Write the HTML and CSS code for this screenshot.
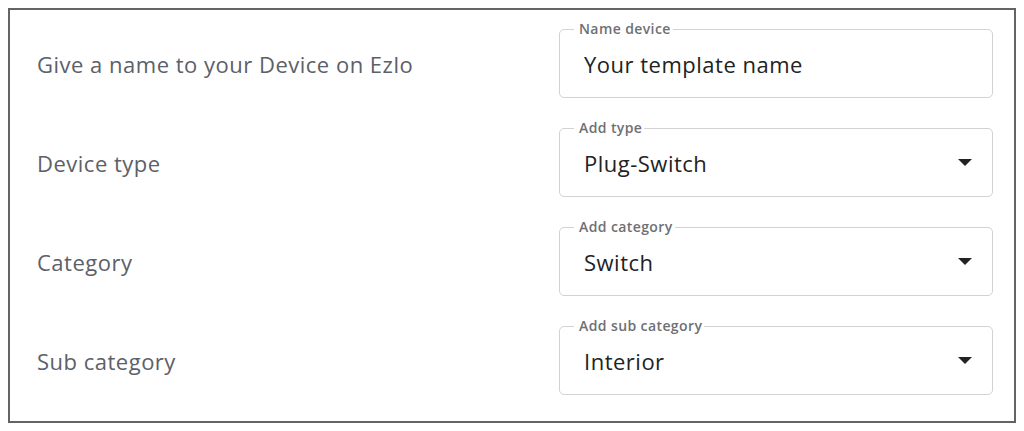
FILE: index.html
```html
<!DOCTYPE html>
<html lang="en">

<head>
    <meta charset="UTF-8">
    <meta name="viewport" content="width=device-width, initial-scale=1.0">
    <title>Device template</title>
    <link rel="stylesheet" href="styles.css">
</head>

<body>
    <form class="device-form">
        <div class="form-row">
            <label class="row-label" for="device-name">Give a name to your Device on Ezlo</label>
            <div class="field">
                <span class="field-legend">Name device</span>
                <input id="device-name" class="field-input" type="text" value="Your template name">
            </div>
        </div>

        <div class="form-row">
            <span class="row-label">Device type</span>
            <div class="field field-select">
                <span class="field-legend">Add type</span>
                <span class="field-value">Plug-Switch</span>
                <svg class="field-arrow" viewBox="0 0 14 7"><path d="M0 0h14L7 7z" /></svg>
            </div>
        </div>

        <div class="form-row">
            <span class="row-label">Category</span>
            <div class="field field-select">
                <span class="field-legend">Add category</span>
                <span class="field-value">Switch</span>
                <svg class="field-arrow" viewBox="0 0 14 7"><path d="M0 0h14L7 7z" /></svg>
            </div>
        </div>

        <div class="form-row">
            <span class="row-label">Sub category</span>
            <div class="field field-select">
                <span class="field-legend">Add sub category</span>
                <span class="field-value">Interior</span>
                <svg class="field-arrow" viewBox="0 0 14 7"><path d="M0 0h14L7 7z" /></svg>
            </div>
        </div>
    </form>
</body>

</html>
```

FILE: styles.css
```css
body {
    margin: 8px;
    background: #fff;
    font-family: "Open Sans", "Liberation Sans", sans-serif;
}

.device-form {
    box-sizing: border-box;
    height: 415px;
    display: flex;
    flex-direction: column;
    gap: 30px;
    padding: 19px 21px 26px 27px;
    border: 2px solid #646464;
    margin: 0;
}

.form-row {
    display: flex;
    align-items: center;
    justify-content: space-between;
    height: 69px;
}

.row-label {
    font-size: 22px;
    letter-spacing: 0.5px;
    color: #5c6068;
    margin-top: 1px;
}

.field {
    position: relative;
    box-sizing: border-box;
    width: 434px;
    height: 69px;
    display: flex;
    align-items: center;
    padding: 0 20px 0 24px;
    border: 1px solid #d2d2d2;
    border-radius: 5px;
}

.field-legend {
    position: absolute;
    top: -9px;
    left: 14px;
    padding: 0 2px 0 5px;
    background: #fff;
    font-size: 14px;
    font-weight: 600;
    letter-spacing: 0.4px;
    color: #6e7074;
    line-height: 16px;
}

.field-input,
.field-value {
    flex: 1;
    font-family: inherit;
    font-size: 22px;
    letter-spacing: 0.5px;
    color: #222;
}

.field-input {
    border: none;
    outline: none;
    padding: 0;
    background: none;
}

.field-arrow {
    width: 14px;
    height: 7px;
    fill: #222;
}
```
